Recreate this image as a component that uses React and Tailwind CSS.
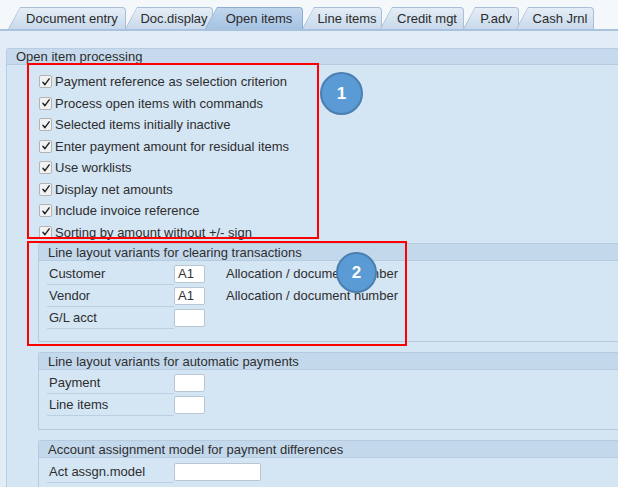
import React from "react";

const TABS = [
  { label: "Document entry", w: 118, ml: 8 },
  { label: "Doc.display", w: 88, ml: -1 },
  { label: "Open items", w: 98, ml: -8, active: true },
  { label: "Line items", w: 80, ml: -1 },
  { label: "Credit mgt", w: 84, ml: -2 },
  { label: "P.adv", w: 56, ml: -1 },
  { label: "Cash Jrnl", w: 78, ml: -3 },
];

const OPTIONS = [
  "Payment reference as selection criterion",
  "Process open items with commands",
  "Selected items initially inactive",
  "Enter payment amount for residual items",
  "Use worklists",
  "Display net amounts",
  "Include invoice reference",
  "Sorting by amount without +/- sign",
];

const font = { fontFamily: '"Liberation Sans", Arial, sans-serif' };

function Tab({ label, w, ml, active }) {
  return (
    <div
      className="relative h-[22px] shrink-0 [clip-path:polygon(12px_0,100%_0,100%_100%,0_100%)]"
      style={{ width: w, marginLeft: ml, zIndex: active ? 10 : 1 }}
    >
      <div className={`absolute inset-0 rounded-tr-[4px] ${active ? "bg-[#8fadd0]" : "bg-[#a9bfd7]"}`} />
      <div
        className={`absolute inset-x-[1px] top-[1px] bottom-0 rounded-tr-[3px] [clip-path:polygon(11px_0,100%_0,100%_100%,0_100%)] ${
          active
            ? "bg-gradient-to-b from-[#c0d6ed] to-[#a6c3e3]"
            : "bg-gradient-to-b from-[#e4edf6] to-[#c8d9eb]"
        }`}
      />
      <span className="relative flex h-full items-center justify-center pl-[10px] pt-[2px] text-[13px] text-[#2b2b2b]">
        {label}
      </span>
    </div>
  );
}

function Check() {
  return (
    <span className="flex h-[13px] w-[13px] shrink-0 items-center justify-center rounded-[2px] border border-[#b3b3b3] bg-[#f2f2f2]">
      <svg viewBox="0 0 12 12" className="h-[10px] w-[10px]">
        <path d="M2.3 6.4 L4.7 9.2 L9.8 2.2" fill="none" stroke="#222" strokeWidth="1.7" strokeLinecap="round" strokeLinejoin="round" />
      </svg>
    </span>
  );
}

function Field({ label, value, width = 31, note }) {
  return (
    <div className="flex h-[22px] items-center">
      <div className="flex h-full w-[127px] shrink-0 items-center border-b border-[#bccfe2] pl-[2px] pt-[1px] text-[13px] text-[#2e2e2e]">
        {label}
      </div>
      <div
        className="h-[18px] shrink-0 rounded-[2px] border border-[#b9c6d3] bg-white px-[3px] text-[13px] leading-[16px] text-[#333]"
        style={{ width }}
      >
        {value}
      </div>
      {note && <span className="ml-[21px] text-[13px] text-[#2e2e2e]">{note}</span>}
    </div>
  );
}

function SubGroup({ title, children, bodyClass }) {
  return (
    <div className="ml-[31px] rounded-tl-[3px] border-y border-l border-[#b7cbe0]">
      <div className="flex h-[17px] items-center rounded-tl-[3px] border-b border-[#b7cbe0] bg-[#c4d8ec] pl-[9px] pt-[1px] text-[13px] text-[#2e2e2e]">
        {title}
      </div>
      <div className={`pl-[8px] ${bodyClass}`}>{children}</div>
    </div>
  );
}

function Badge({ n, className }) {
  return (
    <div
      className={`absolute flex items-center justify-center rounded-full border-2 border-[#4a7fb0] bg-[#5b9bd5] text-[17px] font-bold text-white ${className}`}
    >
      {n}
    </div>
  );
}

export default function App() {
  return (
    <div className="relative h-[487px] w-[618px] overflow-hidden bg-[#f5f8fb]" style={font}>
      {/* Tab strip */}
      <div className="flex h-[29px] items-end">
        {TABS.map((t) => (
          <Tab key={t.label} {...t} />
        ))}
      </div>
      <div className="h-[2px] bg-[#a9c3df]" />

      {/* Content */}
      <div className="h-full bg-[#e2ecf6] pl-[6px] pt-[17px]">
        <div className="h-full rounded-tl-[3px] border-l border-t border-[#b9cde2] bg-[#d4e5f4]">
          <div className="flex h-[16px] items-center rounded-tl-[3px] border-b border-[#b9cde2] bg-[#c7daed] pl-[9px] pt-[1px] text-[13px] text-[#2e2e2e]">
            Open item processing
          </div>

          <div className="pl-[32px] pt-[6px]">
            {OPTIONS.map((o) => (
              <div key={o} className="flex h-[21.5px] items-center gap-[3px] text-[13px] text-[#2e2e2e]">
                <Check />
                <span>{o}</span>
              </div>
            ))}
          </div>

          <div className="flex flex-col gap-[10px]">
            <SubGroup title="Line layout variants for clearing transactions" bodyClass="pt-[2px] pb-[12px]">
              <Field label="Customer" value="A1" note="Allocation / document number" />
              <Field label="Vendor" value="A1" note="Allocation / document number" />
              <Field label="G/L acct" />
            </SubGroup>
            <SubGroup title="Line layout variants for automatic payments" bodyClass="pt-[2px] pb-[13px]">
              <Field label="Payment" />
              <Field label="Line items" />
            </SubGroup>
            <SubGroup title="Account assignment model for payment differences" bodyClass="pt-[3px] pb-[10px]">
              <Field label="Act assgn.model" width={87} />
            </SubGroup>
          </div>
        </div>
      </div>

      {/* Annotations */}
      <div className="absolute left-[27px] top-[63px] h-[176px] w-[292px] border-2 border-[#ff0000]" />
      <div className="absolute left-[27px] top-[241px] h-[105px] w-[380px] border-2 border-[#ff0000]" />
      <Badge n="1" className="left-[320px] top-[72px] h-[43px] w-[43px]" />
      <Badge n="2" className="left-[336px] top-[252px] h-[41px] w-[41px]" />
    </div>
  );
}
